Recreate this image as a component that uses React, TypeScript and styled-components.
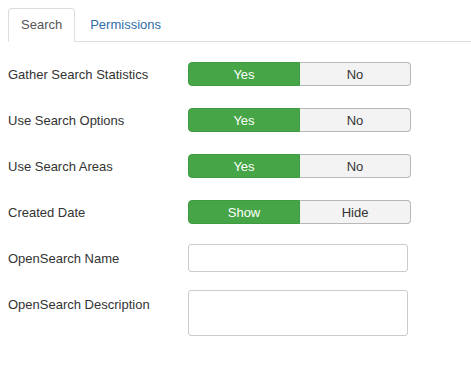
import React, { useState } from 'react';
import styled, { createGlobalStyle } from 'styled-components';

const GlobalStyle = createGlobalStyle`
  html, body {
    margin: 0;
    padding: 0;
    background: #ffffff;
  }
  body {
    font-family: "Liberation Sans", Arial, Helvetica, sans-serif;
    font-size: 13px;
    line-height: 18px;
    color: #333333;
  }
`;

const Page = styled.div`
  padding: 8px 0 0 8px;
`;

const TabList = styled.ul`
  display: flex;
  list-style: none;
  margin: 0 0 18px 0;
  padding: 0;
  border-bottom: 1px solid #dddddd;
`;

const TabItem = styled.li`
  margin: 0 2px -1px 0;
`;

const TabLink = styled.a<{ $active?: boolean }>`
  display: block;
  padding: 7px 12px;
  line-height: 18px;
  border: 1px solid ${p => (p.$active ? '#dddddd' : 'transparent')};
  border-bottom-color: ${p => (p.$active ? '#ffffff' : 'transparent')};
  border-radius: 4px 4px 0 0;
  background: ${p => (p.$active ? '#ffffff' : 'transparent')};
  color: ${p => (p.$active ? '#555555' : '#2f6ea7')};
  text-decoration: none;
  cursor: pointer;
`;

const Form = styled.div`
  display: flex;
  flex-direction: column;
  gap: 18px;
`;

const Row = styled.div`
  display: flex;
  align-items: flex-start;
  min-height: 28px;
`;

const Label = styled.label`
  width: 180px;
  padding-top: 6px;
  line-height: 18px;
`;

const Toggle = styled.div`
  display: flex;
  margin-top: 2px;
  width: 223px;
  height: 24px;
`;

const ToggleButton = styled.button<{ $on?: boolean; $first?: boolean }>`
  flex: 1;
  font-family: inherit;
  font-size: 13px;
  line-height: 18px;
  padding: 1px 0 0 0;
  margin: 0;
  cursor: pointer;
  color: ${p => (p.$on ? '#ffffff' : '#333333')};
  background: ${p => (p.$on ? '#46a546' : '#f3f3f3')};
  border: 1px solid ${p => (p.$on ? '#3f9b3f' : '#b8b8b8')};
  border-left-width: ${p => (p.$first ? '1px' : '0')};
  border-radius: ${p => (p.$first ? '4px 0 0 4px' : '0 4px 4px 0')};
`;

const TextInput = styled.input`
  box-sizing: border-box;
  width: 220px;
  height: 28px;
  border: 1px solid #cccccc;
  border-radius: 3px;
  padding: 4px 6px;
  font-family: inherit;
  font-size: 13px;
  outline: none;
`;

const TextArea = styled.textarea`
  box-sizing: border-box;
  width: 220px;
  height: 46px;
  border: 1px solid #cccccc;
  border-radius: 3px;
  padding: 4px 6px;
  font-family: inherit;
  font-size: 13px;
  resize: none;
  outline: none;
  display: block;
`;

const ToggleField: React.FC<{ label: string; on: string; off: string }> = ({ label, on, off }) => {
  const [value, setValue] = useState(true);
  return (
    <Row>
      <Label>{label}</Label>
      <Toggle>
        <ToggleButton $first $on={value} onClick={() => setValue(true)}>{on}</ToggleButton>
        <ToggleButton $on={!value} onClick={() => setValue(false)}>{off}</ToggleButton>
      </Toggle>
    </Row>
  );
};

export default function App() {
  const [tab, setTab] = useState('search');
  return (
    <Page>
      <GlobalStyle />
      <TabList>
        <TabItem>
          <TabLink $active={tab === 'search'} onClick={() => setTab('search')}>Search</TabLink>
        </TabItem>
        <TabItem>
          <TabLink $active={tab === 'permissions'} onClick={() => setTab('permissions')}>Permissions</TabLink>
        </TabItem>
      </TabList>
      <Form>
        <ToggleField label="Gather Search Statistics" on="Yes" off="No" />
        <ToggleField label="Use Search Options" on="Yes" off="No" />
        <ToggleField label="Use Search Areas" on="Yes" off="No" />
        <ToggleField label="Created Date" on="Show" off="Hide" />
        <Row>
          <Label>OpenSearch Name</Label>
          <TextInput type="text" />
        </Row>
        <Row>
          <Label>OpenSearch Description</Label>
          <TextArea />
        </Row>
      </Form>
    </Page>
  );
}
